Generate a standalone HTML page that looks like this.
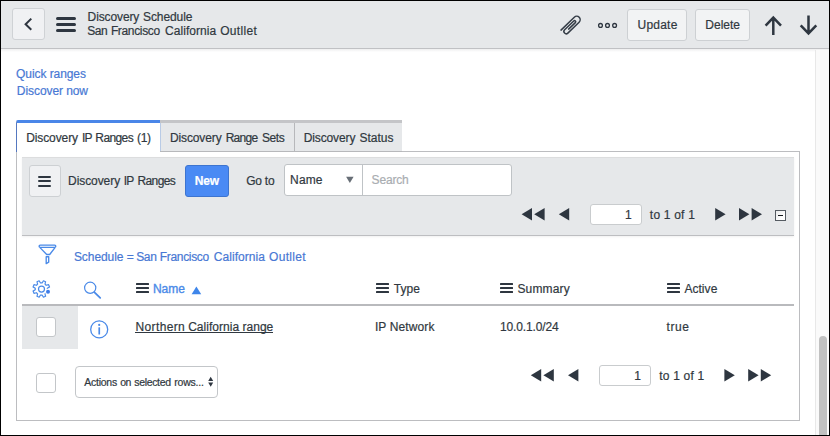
<!DOCTYPE html>
<html><head><meta charset="utf-8"><title>Discovery Schedule</title>
<style>
html,body{margin:0;padding:0;background:#fff}
body{width:830px;height:436px;position:relative;overflow:hidden;font-family:"Liberation Sans",sans-serif}
.t{position:absolute;white-space:pre;line-height:14px;-webkit-text-stroke:0.2px currentColor}
.r{position:absolute;box-sizing:border-box}
</style></head><body>
<div class="r" style="left:0px;top:49px;width:830px;height:3px;background:linear-gradient(#eeeeef,#fff)"></div>
<div class="r" style="left:0px;top:0px;width:830px;height:49px;background:#e6e8ea;border-bottom:1px solid #c0c1c4"></div>
<div class="r" style="left:12px;top:8px;width:32.5px;height:31.5px;background:#f0f1f3;border:1px solid #cfd2d5;border-radius:3px"></div>
<svg class="r" style="left:12px;top:8px" width="33" height="32" viewBox="0 0 33 32"><path d="M19.3 10.6 L13.6 16.2 L19.3 21.8" fill="none" stroke="#2e3640" stroke-width="2" stroke-linecap="butt"/></svg>
<div class="r" style="left:56px;top:17px;width:20px;height:3px;background:#2e3640;border-radius:1.5px"></div>
<div class="r" style="left:56px;top:23px;width:20px;height:3px;background:#2e3640;border-radius:1.5px"></div>
<div class="r" style="left:56px;top:29px;width:20px;height:3px;background:#2e3640;border-radius:1.5px"></div>
<span class="t" style="left:87.60px;top:9.94px;font-size:12px;color:#303840;font-weight:400;"><span class="wd" id="t0" style="letter-spacing:-0.119px;margin-left:0.00px">Discovery</span> <span class="wd" id="t1" style="letter-spacing:-0.100px;margin-left:0.53px">Schedule</span></span>
<span class="t" style="left:87.37px;top:23.64px;font-size:12px;color:#303840;font-weight:400;"><span class="wd" id="t2" style="letter-spacing:-0.509px;margin-left:0.00px">San</span> <span class="wd" id="t3" style="letter-spacing:-0.336px;margin-left:0.35px">Francisco</span> <span class="wd" id="t4" style="letter-spacing:0.063px;margin-left:1.74px">California</span> <span class="wd" id="t5" style="letter-spacing:0.314px;margin-left:0.57px">Outllet</span></span>
<svg class="r" style="left:0;top:0" width="830" height="48" viewBox="0 0 830 48"><g transform="translate(561.0 30.1) rotate(-44)"><path d="M0 0 H18.5 A3.45 3.45 0 0 1 18.5 6.9 H2.84 A2.3 2.3 0 0 1 2.84 2.3 H15.5 A1.15 1.15 0 0 1 15.5 4.6 H6.2" fill="none" stroke="#353d47" stroke-width="1.5" stroke-linecap="round"/></g><g fill="none" stroke="#2e3640" stroke-width="1.3"><circle cx="600.5" cy="25.4" r="1.9"/><circle cx="607.5" cy="25.4" r="1.9"/><circle cx="614.6" cy="25.4" r="1.9"/></g></svg>
<div class="r" style="left:627px;top:9px;width:59.5px;height:31.5px;background:#f2f3f4;border:1px solid #cdd0d3;border-radius:3px"></div>
<div class="r" style="left:695px;top:9px;width:55px;height:31.5px;background:#f2f3f4;border:1px solid #cdd0d3;border-radius:3px"></div>
<span class="t" id="t6" style="left:637.60px;top:17.74px;font-size:12px;letter-spacing:0.203px;color:#303840;font-weight:400;">Update</span>
<span class="t" id="t7" style="left:705.35px;top:17.74px;font-size:12px;letter-spacing:-0.012px;color:#303840;font-weight:400;">Delete</span>
<svg class="r" style="left:0;top:0" width="830" height="48" viewBox="0 0 830 48"><g fill="none" stroke="#2e3640" stroke-width="2.5" stroke-linejoin="miter"><path d="M773.3 35 V18 M765.6 25.6 L773.3 17.6 L781 25.6"/><path d="M808.5 15.6 V33 M800.7 25.4 L808.5 33.4 L816.3 25.4"/></g></svg>
<span class="t" id="t8" style="left:16.12px;top:66.64px;font-size:12px;letter-spacing:-0.077px;color:#4878d4;font-weight:400;">Quick ranges</span>
<span class="t" id="t9" style="left:16.87px;top:84.04px;font-size:12px;letter-spacing:-0.078px;color:#4878d4;font-weight:400;">Discover now</span>
<div class="r" style="left:16px;top:151px;width:784px;height:270px;border:1px solid #bcbdc0;background:#fff"></div>
<div class="r" style="left:160px;top:120px;width:242px;height:32px;background:#e6e8ea;border-top:3px solid #c4c5c8;border-bottom:1px solid #b7b8bb"></div>
<div class="r" style="left:160px;top:123px;width:1px;height:28px;background:#b9cbe6"></div>
<div class="r" style="left:294px;top:123px;width:1px;height:28px;background:#b7b8bb"></div>
<div class="r" style="left:16px;top:120px;width:144px;height:32px;background:#fff;border-top:3px solid #4a86e8;border-left:1px solid #5578c0;border-top-left-radius:2px"></div>
<span class="t" style="left:26.15px;top:130.84px;font-size:12px;color:#303840;font-weight:400;"><span class="wd" id="t10" style="letter-spacing:-0.087px;margin-left:0.00px">Discovery</span> <span class="wd" id="t11" style="letter-spacing:-0.850px;margin-left:0.56px">IP</span> <span class="wd" id="t12" style="letter-spacing:-0.599px;margin-left:0.41px">Ranges</span> <span class="wd" id="t13" style="letter-spacing:-0.290px;margin-left:0.53px">(1)</span></span>
<span class="t" style="left:169.95px;top:130.84px;font-size:12px;color:#303840;font-weight:400;"><span class="wd" id="t14" style="letter-spacing:-0.120px;margin-left:0.00px">Discovery</span> <span class="wd" id="t15" style="letter-spacing:-0.680px;margin-left:0.74px">Range</span> <span class="wd" id="t16" style="letter-spacing:-0.465px;margin-left:1.14px">Sets</span></span>
<span class="t" style="left:303.65px;top:130.84px;font-size:12px;color:#303840;font-weight:400;"><span class="wd" id="t17" style="letter-spacing:-0.111px;margin-left:0.00px">Discovery</span> <span class="wd" id="t18" style="letter-spacing:-0.012px;margin-left:0.75px">Status</span></span>
<div class="r" style="left:22px;top:157px;width:772px;height:79px;background:#e6e8ea;border-bottom:1px solid #bdbec1;border-top:1px solid #dcddde;box-shadow:0 1px 2px rgba(0,0,0,0.06)"></div>
<div class="r" style="left:28.5px;top:165px;width:32px;height:31.5px;background:#f0f1f3;border:1px solid #cdd0d3;border-radius:3px"></div>
<div class="r" style="left:38px;top:175.5px;width:13.3px;height:2px;background:#2e3640;border-radius:1px"></div>
<div class="r" style="left:38px;top:180px;width:13.3px;height:2px;background:#2e3640;border-radius:1px"></div>
<div class="r" style="left:38px;top:184.5px;width:13.3px;height:2px;background:#2e3640;border-radius:1px"></div>
<span class="t" style="left:68.05px;top:174.04px;font-size:12px;color:#303840;font-weight:400;"><span class="wd" id="t19" style="letter-spacing:-0.072px;margin-left:0.00px">Discovery</span> <span class="wd" id="t20" style="letter-spacing:-0.850px;margin-left:0.44px">IP</span> <span class="wd" id="t21" style="letter-spacing:-0.597px;margin-left:0.62px">Ranges</span></span>
<div class="r" style="left:185px;top:165px;width:43.5px;height:31.5px;background:#4a8af4;border:1px solid #3d74cf;border-radius:3px;box-sizing:border-box"></div>
<span class="t" id="t22" style="left:194.71px;top:173.64px;font-size:12px;letter-spacing:-0.196px;color:#fff;font-weight:700;">New</span>
<span class="t" id="t23" style="left:246.20px;top:173.64px;font-size:12px;letter-spacing:-0.235px;color:#303840;font-weight:400;">Go to</span>
<div class="r" style="left:284px;top:164px;width:228px;height:32px;background:#fff;border:1px solid #bfc3c6;border-radius:3px"></div>
<div class="r" style="left:362px;top:165px;width:1px;height:30px;background:#bfc3c6"></div>
<span class="t" id="t24" style="left:290.12px;top:172.54px;font-size:12px;letter-spacing:0.116px;color:#303840;font-weight:400;">Name</span>
<svg class="r" style="left:345px;top:175px" width="11" height="9" viewBox="0 0 11 9"><path d="M1.1 1.8 H8.6 L4.85 7.9 Z" fill="#676e76"/></svg>
<span class="t" id="t25" style="left:371.59px;top:173.44px;font-size:12px;letter-spacing:-0.166px;color:#a9adb1;font-weight:400;">Search</span>
<svg class="r" style="left:0;top:0" width="830" height="436" viewBox="0 0 830 436"><g fill="#2e3640"><path d="M521.6 214.2 L532.0 208.0 V220.39999999999998 Z"/><path d="M534.2 214.2 L544.6 208.0 V220.39999999999998 Z"/><path d="M558.8000000000001 214.2 L569.2 208.0 V220.39999999999998 Z"/><path d="M725.6 214.2 L715.2 208.0 V220.39999999999998 Z"/><path d="M749.4 214.2 L739.0 208.0 V220.39999999999998 Z"/><path d="M762.0 214.2 L751.6 208.0 V220.39999999999998 Z"/></g></svg>
<div class="r" style="left:590.2px;top:204.2px;width:51.6px;height:20.6px;background:#fff;border:1px solid #c9ccce;border-radius:3px;box-sizing:border-box"></div>
<span class="t" id="t26" style="left:625.06px;top:207.64px;font-size:12px;letter-spacing:0.000px;color:#303840;font-weight:400;">1</span>
<span class="t" id="t27" style="left:649.85px;top:207.64px;font-size:12px;letter-spacing:0.200px;color:#303840;font-weight:400;">to 1 of 1</span>
<div class="r" style="left:775px;top:210px;width:11px;height:11px;border:1px solid #555b62;background:linear-gradient(135deg,#e9eaeb,#fff 70%)"></div>
<div class="r" style="left:778px;top:215px;width:5px;height:1px;background:#15181c"></div>
<svg class="r" style="left:0;top:236px" width="120" height="70" viewBox="0 236 120 70"><g fill="none" stroke="#4a8ae8" stroke-width="1.35" stroke-linejoin="round"><rect x="39.1" y="245.1" width="16.7" height="2.2" rx="1.1"/><path d="M40 247.6 L46.7 254.5 H49.7 L55 247.6"/><path d="M46.2 256.7 H48.7 V262.2 L46.2 263.6 Z"/></g></svg>
<span class="t" style="left:73.88px;top:250.14px;font-size:12px;color:#4878d4;font-weight:400;"><span class="wd" id="t28" style="letter-spacing:-0.057px;margin-left:0.00px">Schedule</span> <span class="wd" id="t29" style="letter-spacing:0.000px;margin-left:-0.01px">=</span> <span class="wd" id="t30" style="letter-spacing:-0.350px;margin-left:-1.03px">San</span> <span class="wd" id="t31" style="letter-spacing:-0.310px;margin-left:-0.11px">Francisco</span> <span class="wd" id="t32" style="letter-spacing:0.064px;margin-left:1.43px">California</span> <span class="wd" id="t33" style="letter-spacing:0.311px;margin-left:0.61px">Outllet</span></span>
<svg class="r" style="left:0;top:236px" width="120" height="70" viewBox="0 236 120 70"><g fill="none" stroke="#4a8ae8" stroke-width="1.2" stroke-linejoin="round"><path d="M42.10 282.95 L43.43 280.77 L45.61 281.68 L45.01 284.16 L46.14 285.29 L48.62 284.69 L49.53 286.87 L47.35 288.20 L47.35 289.80 L49.53 291.13 L48.62 293.31 L46.14 292.71 L45.01 293.84 L45.61 296.32 L43.43 297.23 L42.10 295.05 L40.50 295.05 L39.17 297.23 L36.99 296.32 L37.59 293.84 L36.46 292.71 L33.98 293.31 L33.07 291.13 L35.25 289.80 L35.25 288.20 L33.07 286.87 L33.98 284.69 L36.46 285.29 L37.59 284.16 L36.99 281.68 L39.17 280.77 L40.50 282.95 Z"/><circle cx="41.5" cy="289.1" r="3.0"/></g><circle cx="48" cy="291.8" r="3.0" fill="#fff"/><circle cx="48" cy="291.8" r="2.0" fill="#3f7de8"/><circle cx="90.2" cy="287.8" r="5.6" fill="none" stroke="#4a8ae8" stroke-width="1.2"/><path d="M94.5 292.4 L100.2 297.8" stroke="#4a8ae8" stroke-width="1.8" stroke-linecap="round"/></svg>
<div class="r" style="left:136px;top:283px;width:13px;height:2px;background:#2e3640;border-radius:0.5px"></div>
<div class="r" style="left:136px;top:287px;width:13px;height:2px;background:#2e3640;border-radius:0.5px"></div>
<div class="r" style="left:136px;top:291px;width:13px;height:2px;background:#2e3640;border-radius:0.5px"></div>
<span class="t" id="t34" style="left:152.94px;top:282.24px;font-size:12px;letter-spacing:0.008px;color:#4a8ae8;font-weight:400;-webkit-text-stroke:0.35px #4a8ae8">Name</span>
<svg class="r" style="left:191px;top:286px" width="11" height="9" viewBox="0 0 11 9"><path d="M0.6 8.2 L5.4 0.4 L10.2 8.2 Z" fill="#3f86ea"/></svg>
<div class="r" style="left:376px;top:283px;width:13px;height:2px;background:#2e3640;border-radius:0.5px"></div>
<div class="r" style="left:376px;top:287px;width:13px;height:2px;background:#2e3640;border-radius:0.5px"></div>
<div class="r" style="left:376px;top:291px;width:13px;height:2px;background:#2e3640;border-radius:0.5px"></div>
<span class="t" id="t35" style="left:393.70px;top:282.24px;font-size:12px;letter-spacing:0.051px;color:#303840;font-weight:400;">Type</span>
<div class="r" style="left:500px;top:283px;width:13px;height:2px;background:#2e3640;border-radius:0.5px"></div>
<div class="r" style="left:500px;top:287px;width:13px;height:2px;background:#2e3640;border-radius:0.5px"></div>
<div class="r" style="left:500px;top:291px;width:13px;height:2px;background:#2e3640;border-radius:0.5px"></div>
<span class="t" id="t36" style="left:517.40px;top:282.24px;font-size:12px;letter-spacing:0.163px;color:#303840;font-weight:400;">Summary</span>
<div class="r" style="left:667px;top:283px;width:13px;height:2px;background:#2e3640;border-radius:0.5px"></div>
<div class="r" style="left:667px;top:287px;width:13px;height:2px;background:#2e3640;border-radius:0.5px"></div>
<div class="r" style="left:667px;top:291px;width:13px;height:2px;background:#2e3640;border-radius:0.5px"></div>
<span class="t" id="t37" style="left:684.38px;top:282.24px;font-size:12px;letter-spacing:0.050px;color:#303840;font-weight:400;">Active</span>
<div class="r" style="left:22px;top:304px;width:772px;height:2px;background:#b9babd"></div>
<div class="r" style="left:22px;top:306px;width:56px;height:43px;background:#e6e8ea"></div>
<div class="r" style="left:36px;top:317px;width:20px;height:20px;background:#fff;border:1px solid #c3c6c9;border-radius:3px;box-sizing:border-box"></div>
<svg class="r" style="left:89px;top:318.5px" width="21" height="21" viewBox="0 0 21 21"><circle cx="10.2" cy="10.4" r="8.5" fill="none" stroke="#4a8ae8" stroke-width="1.3"/><circle cx="10.2" cy="5.9" r="1.1" fill="#4a8ae8"/><rect x="9.4" y="8.2" width="1.7" height="7.4" rx="0.5" fill="#4a8ae8"/></svg>
<span class="t" style="left:135.57px;top:320.14px;font-size:12px;color:#303840;font-weight:400;"><span class="wd" id="t38" style="letter-spacing:0.359px;margin-left:0.00px">Northern</span> <span class="wd" id="t39" style="letter-spacing:0.035px;margin-left:-0.33px">California</span> <span class="wd" id="t40" style="letter-spacing:-0.003px;margin-left:0.08px">range</span></span>
<div class="r u" style="left:135.2px;top:332px;width:137.7px;height:1px;background:#303840"></div>
<span class="t" id="t41" style="left:374.92px;top:320.14px;font-size:12px;letter-spacing:0.112px;color:#303840;font-weight:400;">IP Network</span>
<span class="t" id="t42" style="left:499.91px;top:320.14px;font-size:12px;letter-spacing:-0.130px;color:#303840;font-weight:400;">10.0.1.0/24</span>
<span class="t" id="t43" style="left:666.55px;top:320.14px;font-size:12px;letter-spacing:0.548px;color:#303840;font-weight:400;">true</span>
<div class="r" style="left:36px;top:373px;width:20px;height:20px;background:#fff;border:1px solid #c3c6c9;border-radius:3px;box-sizing:border-box"></div>
<div class="r" style="left:75px;top:366px;width:143px;height:32px;background:#fff;border:1px solid #c3c6c9;border-radius:4px;box-sizing:border-box"></div>
<span class="t" style="left:84.30px;top:374.96px;font-size:10.5px;color:#303840;font-weight:400;"><span class="wd" id="t44" style="letter-spacing:-0.264px;margin-left:0.00px">Actions</span> <span class="wd" id="t45" style="letter-spacing:-0.688px;margin-left:0.48px">on</span> <span class="wd" id="t46" style="letter-spacing:-0.344px;margin-left:0.81px">selected</span> <span class="wd" id="t47" style="letter-spacing:-0.185px;margin-left:0.58px">rows...</span></span>
<svg class="r" style="left:207px;top:376px" width="8" height="12" viewBox="0 0 8 12"><path d="M1.2 4.9 L3.7 0.8 L6.2 4.9 Z M1.2 6.6 L3.7 10.8 L6.2 6.6 Z" fill="#2e3640"/></svg>
<svg class="r" style="left:0;top:0" width="830" height="436" viewBox="0 0 830 436"><g fill="#2e3640"><path d="M530.8 375.2 L541.1999999999999 369.0 V381.4 Z"/><path d="M543.4 375.2 L553.8 369.0 V381.4 Z"/><path d="M568.0 375.2 L578.4 369.0 V381.4 Z"/><path d="M734.8 375.2 L724.4 369.0 V381.4 Z"/><path d="M758.5999999999999 375.2 L748.1999999999999 369.0 V381.4 Z"/><path d="M771.1999999999999 375.2 L760.8 369.0 V381.4 Z"/></g></svg>
<div class="r" style="left:599.4px;top:365.2px;width:51.6px;height:20.6px;background:#fff;border:1px solid #c9ccce;border-radius:3px;box-sizing:border-box"></div>
<span class="t" id="t48" style="left:634.27px;top:368.64px;font-size:12px;letter-spacing:0.000px;color:#303840;font-weight:400;">1</span>
<span class="t" id="t49" style="left:659.23px;top:368.64px;font-size:12px;letter-spacing:0.195px;color:#303840;font-weight:400;">to 1 of 1</span>
<div class="r" style="left:815px;top:50px;width:14px;height:385px;background:#fafafa;border-left:1px solid #e8e8e8;box-sizing:border-box"></div>
<div class="r" style="left:819px;top:335.5px;width:8px;height:100px;background:#c1c1c1;border-radius:4px 4px 0 0"></div>
<div class="r" style="left:0px;top:0px;width:830px;height:1px;background:#000"></div>
<div class="r" style="left:0px;top:0px;width:1px;height:436px;background:#000"></div>
<div class="r" style="left:829px;top:0px;width:1px;height:436px;background:#000"></div>
<div class="r" style="left:0px;top:434.5px;width:830px;height:1.5px;background:#000"></div>
</body></html>
